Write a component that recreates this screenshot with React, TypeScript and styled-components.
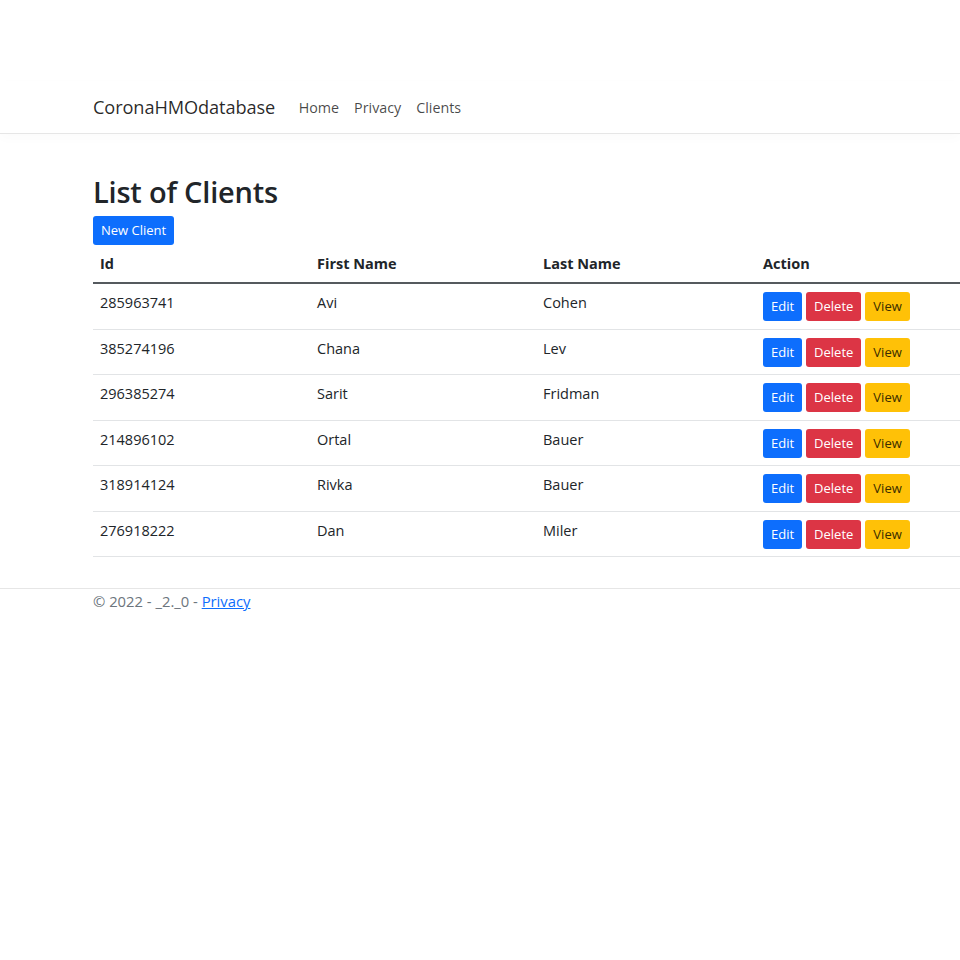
import styled, { createGlobalStyle } from "styled-components";

const GlobalStyle = createGlobalStyle`
  html, body {
    margin: 0;
    padding: 0;
    background: #ffffff;
    overflow: hidden;
  }
  body {
    font-family: "Open Sans", "Noto Sans", sans-serif;
    color: #212529;
    font-size: 15px;
  }
  * {
    box-sizing: border-box;
  }
`;

const Header = styled.header`
  padding-top: 81px;
`;

const NavBar = styled.nav`
  height: 53px;
  border-bottom: 1px solid #e6e6e6;
  box-shadow: 0 0.25rem 0.75rem rgba(0, 0, 0, 0.02);
`;

const Container = styled.div`
  padding-left: 93px;
  display: flex;
  align-items: center;
  height: 100%;
`;

const Brand = styled.a`
  font-size: 18.2px;
  color: rgba(0, 0, 0, 0.85);
  text-decoration: none;
  margin-right: 16px;
  letter-spacing: -0.1px;
`;

const NavLink = styled.a`
  font-size: 14.3px;
  color: rgba(0, 0, 0, 0.72);
  text-decoration: none;
  padding: 0 7.5px;
`;

const Main = styled.main`
  padding: 40px 0 0 93px;
`;

const Title = styled.h1`
  margin: 0 0 6px;
  font-size: 29px;
  font-weight: 600;
  line-height: 36px;
  letter-spacing: -0.2px;
`;

const Button = styled.button<{ $variant: "primary" | "danger" | "warning" }>`
  font-family: inherit;
  font-size: 13px;
  height: 29px;
  padding: 0 8px;
  border-radius: 3px;
  border: none;
  cursor: pointer;
  line-height: 29px;
  background: ${(p) =>
    p.$variant === "primary"
      ? "#0d6efd"
      : p.$variant === "danger"
      ? "#dc3545"
      : "#ffc107"};
  color: ${(p) => (p.$variant === "warning" ? "#3a2e00" : "#ffffff")};
`;

const Table = styled.table`
  border-collapse: collapse;
  table-layout: fixed;
  width: 867px;
  margin-bottom: 31px;
`;

const Th = styled.th<{ $w?: number }>`
  text-align: left;
  font-weight: 700;
  font-size: 14.5px;
  padding: 8px 7px 7px;
  line-height: 22px;
  width: ${(p) => (p.$w ? `${p.$w}px` : "auto")};
  border-bottom: 2px solid #555a5e;
`;

const Td = styled.td`
  vertical-align: top;
  padding: 8px 7px 7.5px;
  line-height: 22px;
  font-size: 14.5px;
  border-bottom: 1px solid #e2e4e6;
`;

const Actions = styled.div`
  display: flex;
  gap: 4px;
`;

const Footer = styled.footer`
  border-top: 1px solid #e6e6e6;
  padding-left: 93px;
  line-height: 24px;
  font-size: 14.8px;
  color: #6c757d;
`;

const FooterLink = styled.a`
  color: #0d6efd;
  text-decoration: underline;
`;

const clients = [
  { id: "285963741", first: "Avi", last: "Cohen" },
  { id: "385274196", first: "Chana", last: "Lev" },
  { id: "296385274", first: "Sarit", last: "Fridman" },
  { id: "214896102", first: "Ortal", last: "Bauer" },
  { id: "318914124", first: "Rivka", last: "Bauer" },
  { id: "276918222", first: "Dan", last: "Miler" },
];

export default function App() {
  return (
    <>
      <GlobalStyle />
      <Header>
        <NavBar>
          <Container>
            <Brand href="#">CoronaHMOdatabase</Brand>
            <NavLink href="#">Home</NavLink>
            <NavLink href="#">Privacy</NavLink>
            <NavLink href="#">Clients</NavLink>
          </Container>
        </NavBar>
      </Header>
      <Main>
        <Title>List of Clients</Title>
        <Button $variant="primary">New Client</Button>
        <Table>
          <thead>
            <tr>
              <Th $w={217}>Id</Th>
              <Th $w={226}>First Name</Th>
              <Th $w={220}>Last Name</Th>
              <Th>Action</Th>
            </tr>
          </thead>
          <tbody>
            {clients.map((c) => (
              <tr key={c.id}>
                <Td>{c.id}</Td>
                <Td>{c.first}</Td>
                <Td>{c.last}</Td>
                <Td>
                  <Actions>
                    <Button $variant="primary">Edit</Button>
                    <Button $variant="danger">Delete</Button>
                    <Button $variant="warning">View</Button>
                  </Actions>
                </Td>
              </tr>
            ))}
          </tbody>
        </Table>
      </Main>
      <Footer>
        © 2022 - _2._0 - <FooterLink href="#">Privacy</FooterLink>
      </Footer>
    </>
  );
}
